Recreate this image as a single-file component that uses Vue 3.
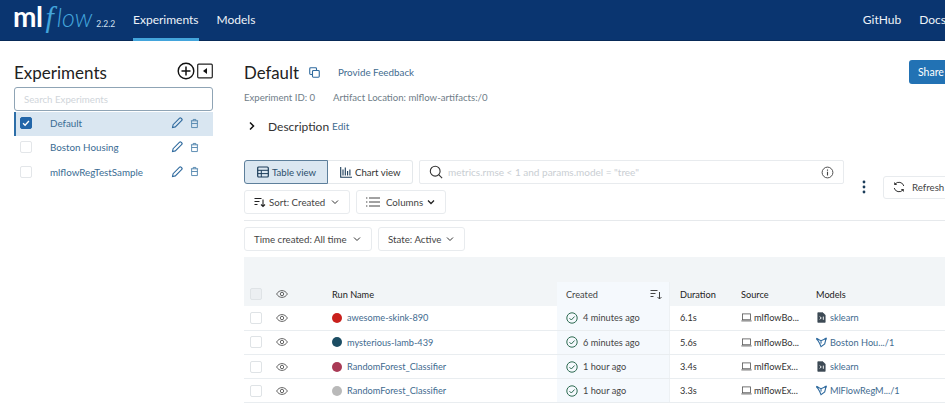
<template>
  <div class="page">
    <header class="top">
      <div class="logo"><span class="ml">ml</span><span class="f">f</span><span class="flow">low</span><span class="ver">2.2.2</span></div>
      <nav class="nav">
        <a class="navitem active">Experiments</a>
        <a class="navitem">Models</a>
      </nav>
      <div class="navright">
        <a class="navitem">GitHub</a>
        <a class="navitem">Docs</a>
      </div>
    </header>
    <div class="body">
      <aside class="side">
        <div class="side-head">
          <h2>Experiments</h2>
          <svg class="plus" viewBox="0 0 18 18"><circle cx="9" cy="9" r="7.8" fill="none" stroke="#111" stroke-width="1.4"/><path d="M9 4.5v9M4.5 9h9" stroke="#111" stroke-width="1.5"/></svg>
          <svg class="collapse" viewBox="0 0 16 16"><rect x=".7" y="1.2" width="14.6" height="13.6" rx="1" fill="none" stroke="#222" stroke-width="1.2"/><path d="M10 5v6L6 8z" fill="#111"/></svg>
        </div>
        <div class="side-search">Search Experiments</div>
        <div v-for="(e, i) in experiments" :key="e" class="exp" :class="{ sel: i === 0 }">
          <span class="cb" :class="{ on: i === 0 }">
            <svg v-if="i === 0" viewBox="0 0 12 12"><path d="M2.5 6.2l2.4 2.4 4.6-5" fill="none" stroke="#fff" stroke-width="1.6"/></svg>
          </span>
          <span class="exp-name">{{ e }}</span>
          <svg class="pen" viewBox="0 0 12 12"><path d="M1.5 10.5l.6-2.8L8.6 1.2a1 1 0 0 1 1.4 0l.8.8a1 1 0 0 1 0 1.4L4.3 9.9z" fill="none" stroke="#2f6a9e" stroke-width="1.1"/></svg>
          <svg class="bin" viewBox="0 0 10 12"><path d="M1 3h8M3.5 3V1.5h3V3M1.8 3v7.5h6.4V3M1.8 6h6.4" fill="none" stroke="#4f83ad" stroke-width="1"/></svg>
        </div>
      </aside>
      <main class="main">
        <div class="title-row">
          <h1>Default</h1>
          <svg class="copy" viewBox="0 0 12 12"><rect x=".8" y=".8" width="7.4" height="7.4" rx="1" fill="none" stroke="#2f6a9e" stroke-width="1.2"/><rect x="3.8" y="3.8" width="7.4" height="7.4" rx="1" fill="#fff" stroke="#2f6a9e" stroke-width="1.2"/></svg>
          <a class="feedback">Provide Feedback</a>
          <button class="share">Share</button>
        </div>
        <div class="meta"><span>Experiment ID: 0</span><span>Artifact Location: mlflow-artifacts:/0</span></div>
        <div class="desc">
          <svg class="chev" viewBox="0 0 8 10"><path d="M2 1.5L5.5 5 2 8.5" fill="none" stroke="#111" stroke-width="1.5"/></svg>
          <span class="desc-t">Description</span><a class="edit">Edit</a>
        </div>
        <div class="tools">
          <div class="tools-left">
            <div class="row">
              <div class="seg">
                <div class="segbtn on">
                  <svg class="ico" viewBox="0 0 12 12"><rect x=".7" y="1" width="10.6" height="10" rx="1" fill="none" stroke="#1c3d5a" stroke-width="1.2"/><path d="M.7 4.3h10.6M.7 7.6h10.6M4.3 4.3V11" stroke="#1c3d5a" stroke-width="1"/></svg>Table view
                </div>
                <div class="segbtn">
                  <svg class="ico" viewBox="0 0 12 12"><path d="M.7 1v10.3H12M3 3.5v6M5.3 1.5v8M7.6 5v4.5M9.9 3.5v6" fill="none" stroke="#1c3d5a" stroke-width="1.1"/></svg>Chart view
                </div>
              </div>
              <div class="search">
                <svg class="mag" viewBox="0 0 14 14"><circle cx="6.2" cy="6.2" r="4.9" fill="none" stroke="#333" stroke-width="1.1"/><path d="M9.7 9.7l3.4 3.4" stroke="#333" stroke-width="1.1"/></svg>
                <span class="ph">metrics.rmse &lt; 1 and params.model = "tree"</span>
                <svg class="info" viewBox="0 0 14 14"><circle cx="7" cy="7" r="5.8" fill="none" stroke="#444" stroke-width="1"/><path d="M7 6.2v4M7 3.8v1.2" stroke="#444" stroke-width="1.2"/></svg>
              </div>
            </div>
            <div class="row">
              <div class="btn w-sort">
                <svg class="ico" viewBox="0 0 12 12"><path d="M.5 2.5h7M.5 5.5h5M.5 8.5h3M9 3.5v7M7 8.5l2 2 2-2" fill="none" stroke="#222" stroke-width="1.1"/></svg>
                <span>Sort: Created</span>
                <svg class="caret" viewBox="0 0 8 6"><path d="M1 1.5l3 3 3-3" fill="none" stroke="#333" stroke-width="1"/></svg>
              </div>
              <div class="btn w-cols">
                <svg class="ico lines" viewBox="0 0 14 12"><path d="M0 2h1.4M3 2h11M0 6h1.4M3 6h11M0 10h1.4M3 10h11" stroke="#444" stroke-width="1"/></svg>
                <span>Columns</span>
                <svg class="caret" viewBox="0 0 8 6"><path d="M1 1.5l3 3 3-3" fill="none" stroke="#222" stroke-width="1.3"/></svg>
              </div>
            </div>
          </div>
          <svg class="kebab" viewBox="0 0 4 14"><circle cx="2" cy="2" r="1.4" fill="#1c3d5a"/><circle cx="2" cy="7" r="1.4" fill="#1c3d5a"/><circle cx="2" cy="12" r="1.4" fill="#1c3d5a"/></svg>
          <div class="refresh">
            <svg class="ico rico" viewBox="0 0 12 12"><path d="M10.8 5A5 5 0 0 0 2 3.2M1.2 7A5 5 0 0 0 10 8.8" fill="none" stroke="#333" stroke-width="1"/><path d="M1.2 1v3h3zM10.8 11V8h-3z" fill="#333"/></svg>
            Refresh
          </div>
        </div>
        <div class="divider"></div>
        <div class="row filters">
          <div class="btn w-time"><span>Time created: All time</span><svg class="caret" viewBox="0 0 8 6"><path d="M1 1.5l3 3 3-3" fill="none" stroke="#333" stroke-width="1"/></svg></div>
          <div class="btn w-state"><span>State: Active</span><svg class="caret" viewBox="0 0 8 6"><path d="M1 1.5l3 3 3-3" fill="none" stroke="#333" stroke-width="1"/></svg></div>
        </div>
        <div class="band"></div>
        <div class="tr th">
          <div class="c-cb"><span class="box head"></span></div>
          <div class="c-eye"><svg class="eye" viewBox="0 0 12 8"><path d="M.6 4C2 1.7 3.9.6 6 .6S10 1.7 11.4 4C10 6.3 8.1 7.4 6 7.4S2 6.3.6 4z" fill="none" stroke="#555" stroke-width=".9"/><circle cx="6" cy="4" r="1.7" fill="none" stroke="#555" stroke-width=".9"/></svg></div>
          <div class="c-name">Run Name</div>
          <div class="c-created hd">Created<svg class="sorticon" viewBox="0 0 12 11"><path d="M.5 1.5h7M.5 4.5h5M.5 7.5h3M9.5 3v7M7.5 8l2 2 2-2" fill="none" stroke="#444" stroke-width="1"/></svg></div>
          <div class="c-dur">Duration</div>
          <div class="c-src">Source</div>
          <div class="c-mod">Models</div>
        </div>
        <div v-for="r in runs" :key="r.id" class="tr">
          <div class="c-cb"><span class="box"></span></div>
          <div class="c-eye"><svg class="eye" viewBox="0 0 12 8"><path d="M.6 4C2 1.7 3.9.6 6 .6S10 1.7 11.4 4C10 6.3 8.1 7.4 6 7.4S2 6.3.6 4z" fill="none" stroke="#555" stroke-width=".9"/><circle cx="6" cy="4" r="1.7" fill="none" stroke="#555" stroke-width=".9"/></svg></div>
          <div class="c-name"><span class="dot" :style="{ background: r.color }"></span><a class="lnk">{{ r.name }}</a></div>
          <div class="c-created">
            <svg class="ok" viewBox="0 0 12 12"><circle cx="6" cy="6" r="5.2" fill="none" stroke="#2e6b52" stroke-width="1"/><path d="M3.5 6.2l1.8 1.8 3.3-3.5" fill="none" stroke="#2e6b52" stroke-width="1"/></svg>{{ r.created }}
          </div>
          <div class="c-dur">{{ r.dur }}</div>
          <div class="c-src">
            <svg class="laptop" viewBox="0 0 12 10"><rect x="1.5" y="1" width="9" height="6.5" fill="none" stroke="#555" stroke-width=".9"/><path d="M.3 8.8h11.4" stroke="#555" stroke-width="1"/></svg>{{ r.src }}
          </div>
          <div class="c-mod">
            <svg v-if="r.reg" class="modelico" viewBox="0 0 12 11"><path d="M1 1.5l4.5 2 5.5-2.5-1.5 6-4 3-1.5-3.5zM5.5 3.5v3" fill="none" stroke="#2f6a9e" stroke-width="1.2"/><circle cx="1.5" cy="2" r="1.2" fill="#2f6a9e"/><circle cx="10.5" cy="1.5" r="1.2" fill="#2f6a9e"/></svg>
            <svg v-else class="modelico" viewBox="0 0 10 12"><path d="M1 .8h5.5L9 3.3v8H1z" fill="#3d4a55" stroke="#3d4a55" stroke-width=".8"/><path d="M3 5l1.8 1.5L3 8M7 5v3.5" fill="none" stroke="#fff" stroke-width="1"/></svg>
            <a class="lnk">{{ r.model }}</a>
          </div>
        </div>
      </main>
    </div>
  </div>
</template>

<script setup>
const experiments = ['Default', 'Boston Housing', 'mlflowRegTestSample']
const runs = [
  { id: 1, name: 'awesome-skink-890', color: '#c9201c', created: '4 minutes ago', dur: '6.1s', src: 'mlflowBo...', model: 'sklearn', reg: false },
  { id: 2, name: 'mysterious-lamb-439', color: '#1c4d63', created: '6 minutes ago', dur: '5.6s', src: 'mlflowBo...', model: 'Boston Hou.../1', reg: true },
  { id: 3, name: 'RandomForest_Classifier', color: '#a93a55', created: '1 hour ago', dur: '3.4s', src: 'mlflowEx...', model: 'sklearn', reg: false },
  { id: 4, name: 'RandomForest_Classifier', color: '#b9b9b9', created: '1 hour ago', dur: '3.3s', src: 'mlflowEx...', model: 'MlFlowRegM.../1', reg: true }
]
</script>

<style>
html, body { margin: 0; overflow: hidden; background: #fff; }
</style>

<style scoped>
.page { width: 945px; height: 414px; overflow: hidden; font-family: Lato, "Open Sans", sans-serif; color: #333; font-size: 9.7px; background: #fff; white-space: nowrap; }
.top { height: 41px; background: #0a3570; display: flex; align-items: stretch; box-sizing: border-box; border-bottom: 1px solid #082a58; color: #eef3f8; }
.logo { width: 133px; flex: none; box-sizing: border-box; padding-left: 13px; display: flex; align-items: baseline; line-height: 30px; height: 40px; }
.ml { font-weight: 700; font-size: 28px; color: #fff; letter-spacing: -.5px; }
.f { font-family: "Liberation Serif", serif; font-style: italic; font-size: 30px; line-height: 34px; color: #43a5dc; margin-left: 3px; }
.flow { font-style: italic; font-weight: 300; font-size: 25px; color: #43a5dc; margin-left: 3px; }
.ver { font-size: 8.5px; color: #cfe0ee; margin-left: 4px; }
.nav { display: flex; gap: 18px; }
.navright { margin-left: auto; margin-right: -1px; display: flex; gap: 18px; flex: none; }
.navitem { font-size: 12px; line-height: 40px; height: 41px; box-sizing: border-box; color: #eef3f8; }
.navitem.active { border-bottom: 3px solid #43a5dc; }
.body { display: flex; }
.side { width: 244px; flex: none; box-sizing: border-box; padding: 19px 31px 0 14px; }
.side-head { display: flex; align-items: center; height: 27px; }
.side-head h2 { margin: -3px 0 0; font-weight: 400; font-size: 17px; color: #222; flex: 1; }
.plus { width: 18px; height: 18px; margin-right: 2px; margin-top: -6px; }
.collapse { width: 16px; height: 16px; margin-top: -6px; }
.side-search { height: 24px; box-sizing: border-box; border: 1px solid #8fa4b5; border-radius: 3px; padding-left: 9px; line-height: 22px; font-size: 9.7px; color: #d0d5da; margin-bottom: 1px; }
.exp { height: 24.3px; display: flex; align-items: center; box-sizing: border-box; padding: 0 0 2px 6px; color: #3a6c93; font-size: 9.8px; }
.exp.sel { background: #d9e6f1; border-left: 2px solid #2d6ea8; padding-left: 4px; }
.cb { width: 12px; height: 12px; box-sizing: border-box; border: 1px solid #e3e6e9; border-radius: 2px; flex: none; }
.cb.on { background: #2266a9; border-color: #2266a9; display: flex; }
.exp-name { margin-left: 18px; flex: 1; }
.pen { width: 12px; height: 12px; margin-right: 7px; }
.bin { width: 9px; height: 11px; margin-right: 14px; }
.main { flex: 1; min-width: 0; }
.title-row { display: flex; align-items: center; height: 24px; margin-top: 19px; position: relative; }
.title-row h1 { margin: 0; font-weight: 400; font-size: 16.8px; color: #222; }
.copy { width: 11px; height: 11px; margin-left: 10px; }
.feedback { margin-left: 18px; color: #3f6b8f; font-size: 9.8px; }
.share { margin-left: auto; width: 60px; height: 24px; flex: none; transform: translateX(24px); background: #2272b4; border: 0; border-radius: 3px; color: #fff; font: 10.5px Lato, sans-serif; text-align: left; padding-left: 9px; }
.meta { display: flex; gap: 18px; color: #6f7d88; font-size: 9.6px; margin-top: 7px; height: 14px; line-height: 14px; }
.desc { display: flex; align-items: center; height: 20px; margin-top: 11px; padding-left: 4px; }
.chev { width: 8px; height: 10px; }
.desc-t { font-size: 12px; color: #333; margin-left: 12px; }
.edit { font-size: 10px; color: #3f6b8f; margin-left: 3px; }
.tools { display: flex; align-items: center; margin-top: 24px; }
.tools-left { width: 600px; flex: none; display: flex; flex-direction: column; gap: 6px; }
.row { display: flex; gap: 6px; }
.seg { display: flex; flex: none; }
.segbtn { height: 24px; box-sizing: border-box; border: 1px solid #e4e8eb; display: flex; align-items: center; padding-left: 12px; color: #333; font-size: 9.6px; width: 85px; border-radius: 0 3px 3px 0; border-left: 0; }
.segbtn.on { width: 84px; background: #dbe7f1; border: 1px solid #5d7f9b; border-radius: 3px 0 0 3px; color: #2c4f6c; }
.ico { width: 12px; height: 12px; margin-right: 3px; flex: none; }
.lines { width: 14px; margin-right: 6px; }
.rico { margin-right: 7px; }
.search { flex: 1; height: 24px; box-sizing: border-box; border: 1px solid #e8ebee; border-radius: 2px; display: flex; align-items: center; padding: 0 9px; }
.mag { width: 14px; height: 14px; }
.ph { flex: 1; margin-left: 5px; color: #c9ced3; font-size: 10px; }
.info { width: 13px; height: 13px; }
.btn { height: 24px; box-sizing: border-box; border: 1px solid #e8ebee; border-radius: 3px; display: flex; align-items: center; padding: 0 9px; color: #444; font-size: 9.7px; }
.btn span { flex: 1; }
.caret { width: 8px; height: 6px; margin-right: 1px; }
.w-sort { width: 106px; }
.w-cols { width: 90px; padding-left: 9px; }
.w-time { width: 128px; }
.w-state { width: 87px; }
.kebab { width: 4px; height: 14px; margin-left: 18px; flex: none; }
.refresh { margin-left: 17px; width: 90px; flex: none; height: 23px; box-sizing: border-box; border: 1px solid #e8ebee; border-radius: 3px; display: flex; align-items: center; padding-left: 9px; font-size: 9.7px; color: #444; }
.divider { height: 1px; background: #e6e9ec; margin-top: 6px; }
.filters { margin-top: 6px; }
.band { height: 25px; background: #f2f5f7; margin-top: 6px; }
.tr { height: 24.3px; display: flex; align-items: stretch; box-sizing: border-box; border-bottom: 1px solid #e9edf0; font-size: 9.2px; color: #333; }
.th { background: #f2f5f7; color: #222; border-bottom: 0; }
.tr > div { display: flex; align-items: center; flex: none; box-sizing: border-box; }
.c-cb { width: 28px; padding-left: 6px; }
.box { width: 12px; height: 12px; box-sizing: border-box; border: 1px solid #dfe3e6; border-radius: 2px; background: #fff; }
.box.head { background: #eceff2; }
.c-eye { width: 60px; padding-left: 4px; }
.eye { width: 12px; height: 8px; }
.c-name { width: 225px; }
.dot { width: 10px; height: 10px; border-radius: 50%; margin-right: 5px; flex: none; }
.lnk { color: #3f6b8f; }
.c-created { width: 113px; padding-left: 9px; background: #f5f9fd; color: #444; border-right: 1px solid #edf1f4; }
.c-created.hd { justify-content: space-between; padding-right: 7px; }
.sorticon { width: 12px; height: 11px; }
.ok { width: 12px; height: 12px; margin-right: 5px; }
.c-dur { width: 71px; padding-left: 10px; }
.c-src { width: 75px; }
.laptop { width: 11px; height: 9px; margin-right: 2px; }
.c-mod { flex: 1 !important; }
.modelico { width: 11px; height: 11px; margin-right: 3px; }
</style>
